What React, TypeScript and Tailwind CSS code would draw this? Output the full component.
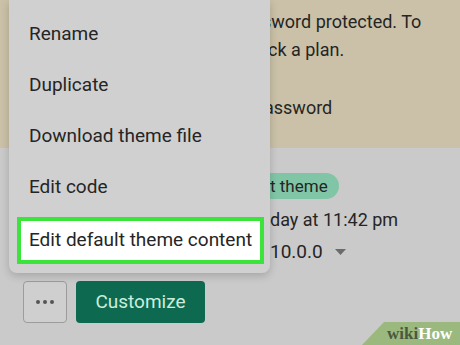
function Line({ hidden, text, shift = 0 }: { hidden: string; text: string; shift?: number }) {
  return (
    <div className="flex whitespace-nowrap" style={{ marginLeft: shift }}>
      <span className="flex w-0 justify-end">{hidden}</span>
      <span>{text}</span>
    </div>
  );
}

const items = ["Rename", "Duplicate", "Download theme file", "Edit code"];

export default function App() {
  return (
    <div className="relative h-[345px] w-[460px] overflow-hidden bg-[#cacaca] font-['Roboto',sans-serif] text-[19px] text-[#252525]">
      {/* store notice */}
      <div className="h-[148px] bg-[#cbc1a8] pl-[270px] pt-[8px] text-[18px] leading-[28px]">
        <Line hidden="Your store is pas" text="sword protected. To" shift={-8} />
        <Line hidden="remove it, pi" text="ck a plan." shift={-2} />
        <div className="mt-[30px]">
          <Line hidden="Enter using p" text="assword" shift={-6} />
        </div>
      </div>

      {/* theme info */}
      <div className="pl-[270px] pt-[25px] text-[18px] leading-[28px]">
        <div className="flex">
          <span className="-ml-[60px] flex h-[26px] items-center rounded-full bg-[#80c6a6] pl-[60px] pr-[11px] text-[17px]">
            <span className="flex w-0 justify-end whitespace-nowrap">Curren</span>
            <span className="whitespace-nowrap">t theme</span>
          </span>
        </div>
        <div className="mt-[7px]">
          <Line hidden="Saved to" text="day at 11:42 pm" />
        </div>
        <div className="mt-[4px] flex items-center text-[19px]">
          <span>10.0.0</span>
          <svg width="11" height="6" viewBox="0 0 11 6" className="ml-[12px]">
            <path d="M0 0h11L5.5 6z" fill="#6b6b6b" />
          </svg>
        </div>
      </div>

      {/* actions */}
      <div className="mt-[15px] flex gap-[9px] pl-[23px]">
        <button className="flex h-[42px] w-[44px] items-center justify-center gap-[3px] rounded-[4px] border border-[#9c9c9c] bg-[#cfcfcf]">
          <span className="h-[4px] w-[4px] rounded-full bg-[#555]" />
          <span className="h-[4px] w-[4px] rounded-full bg-[#555]" />
          <span className="h-[4px] w-[4px] rounded-full bg-[#555]" />
        </button>
        <button className="h-[42px] w-[129px] rounded-[4px] bg-[#0d6a51] text-[#cbeedc]">Customize</button>
      </div>

      {/* dropdown menu */}
      <div className="absolute left-[9px] top-0 flex h-[273px] w-[261px] flex-col rounded-b-[8px] bg-[#d0d0d0] pt-[9px] shadow-[0_3px_8px_rgba(0,0,0,0.18)]">
        {items.map((item) => (
          <div key={item} className="flex h-[51px] items-center pl-[20px]">
            {item}
          </div>
        ))}
        <div className="ml-[8px] mt-[4px] flex h-[47px] w-[247px] items-center border-[4px] border-[#3be43b] bg-white pl-[8px]">
          Edit default theme content
        </div>
      </div>

      {/* watermark */}
      <div className="absolute bottom-0 right-0 flex h-[23px] w-[98px] items-center bg-[#9bb97e] pl-[25px] font-['Liberation_Serif',serif] text-[17px] font-bold [clip-path:polygon(22px_0,100%_0,100%_100%,0_100%)]">
        <span className="text-[#4a5840]">wiki</span>
        <span className="text-white">How</span>
      </div>
    </div>
  );
}
